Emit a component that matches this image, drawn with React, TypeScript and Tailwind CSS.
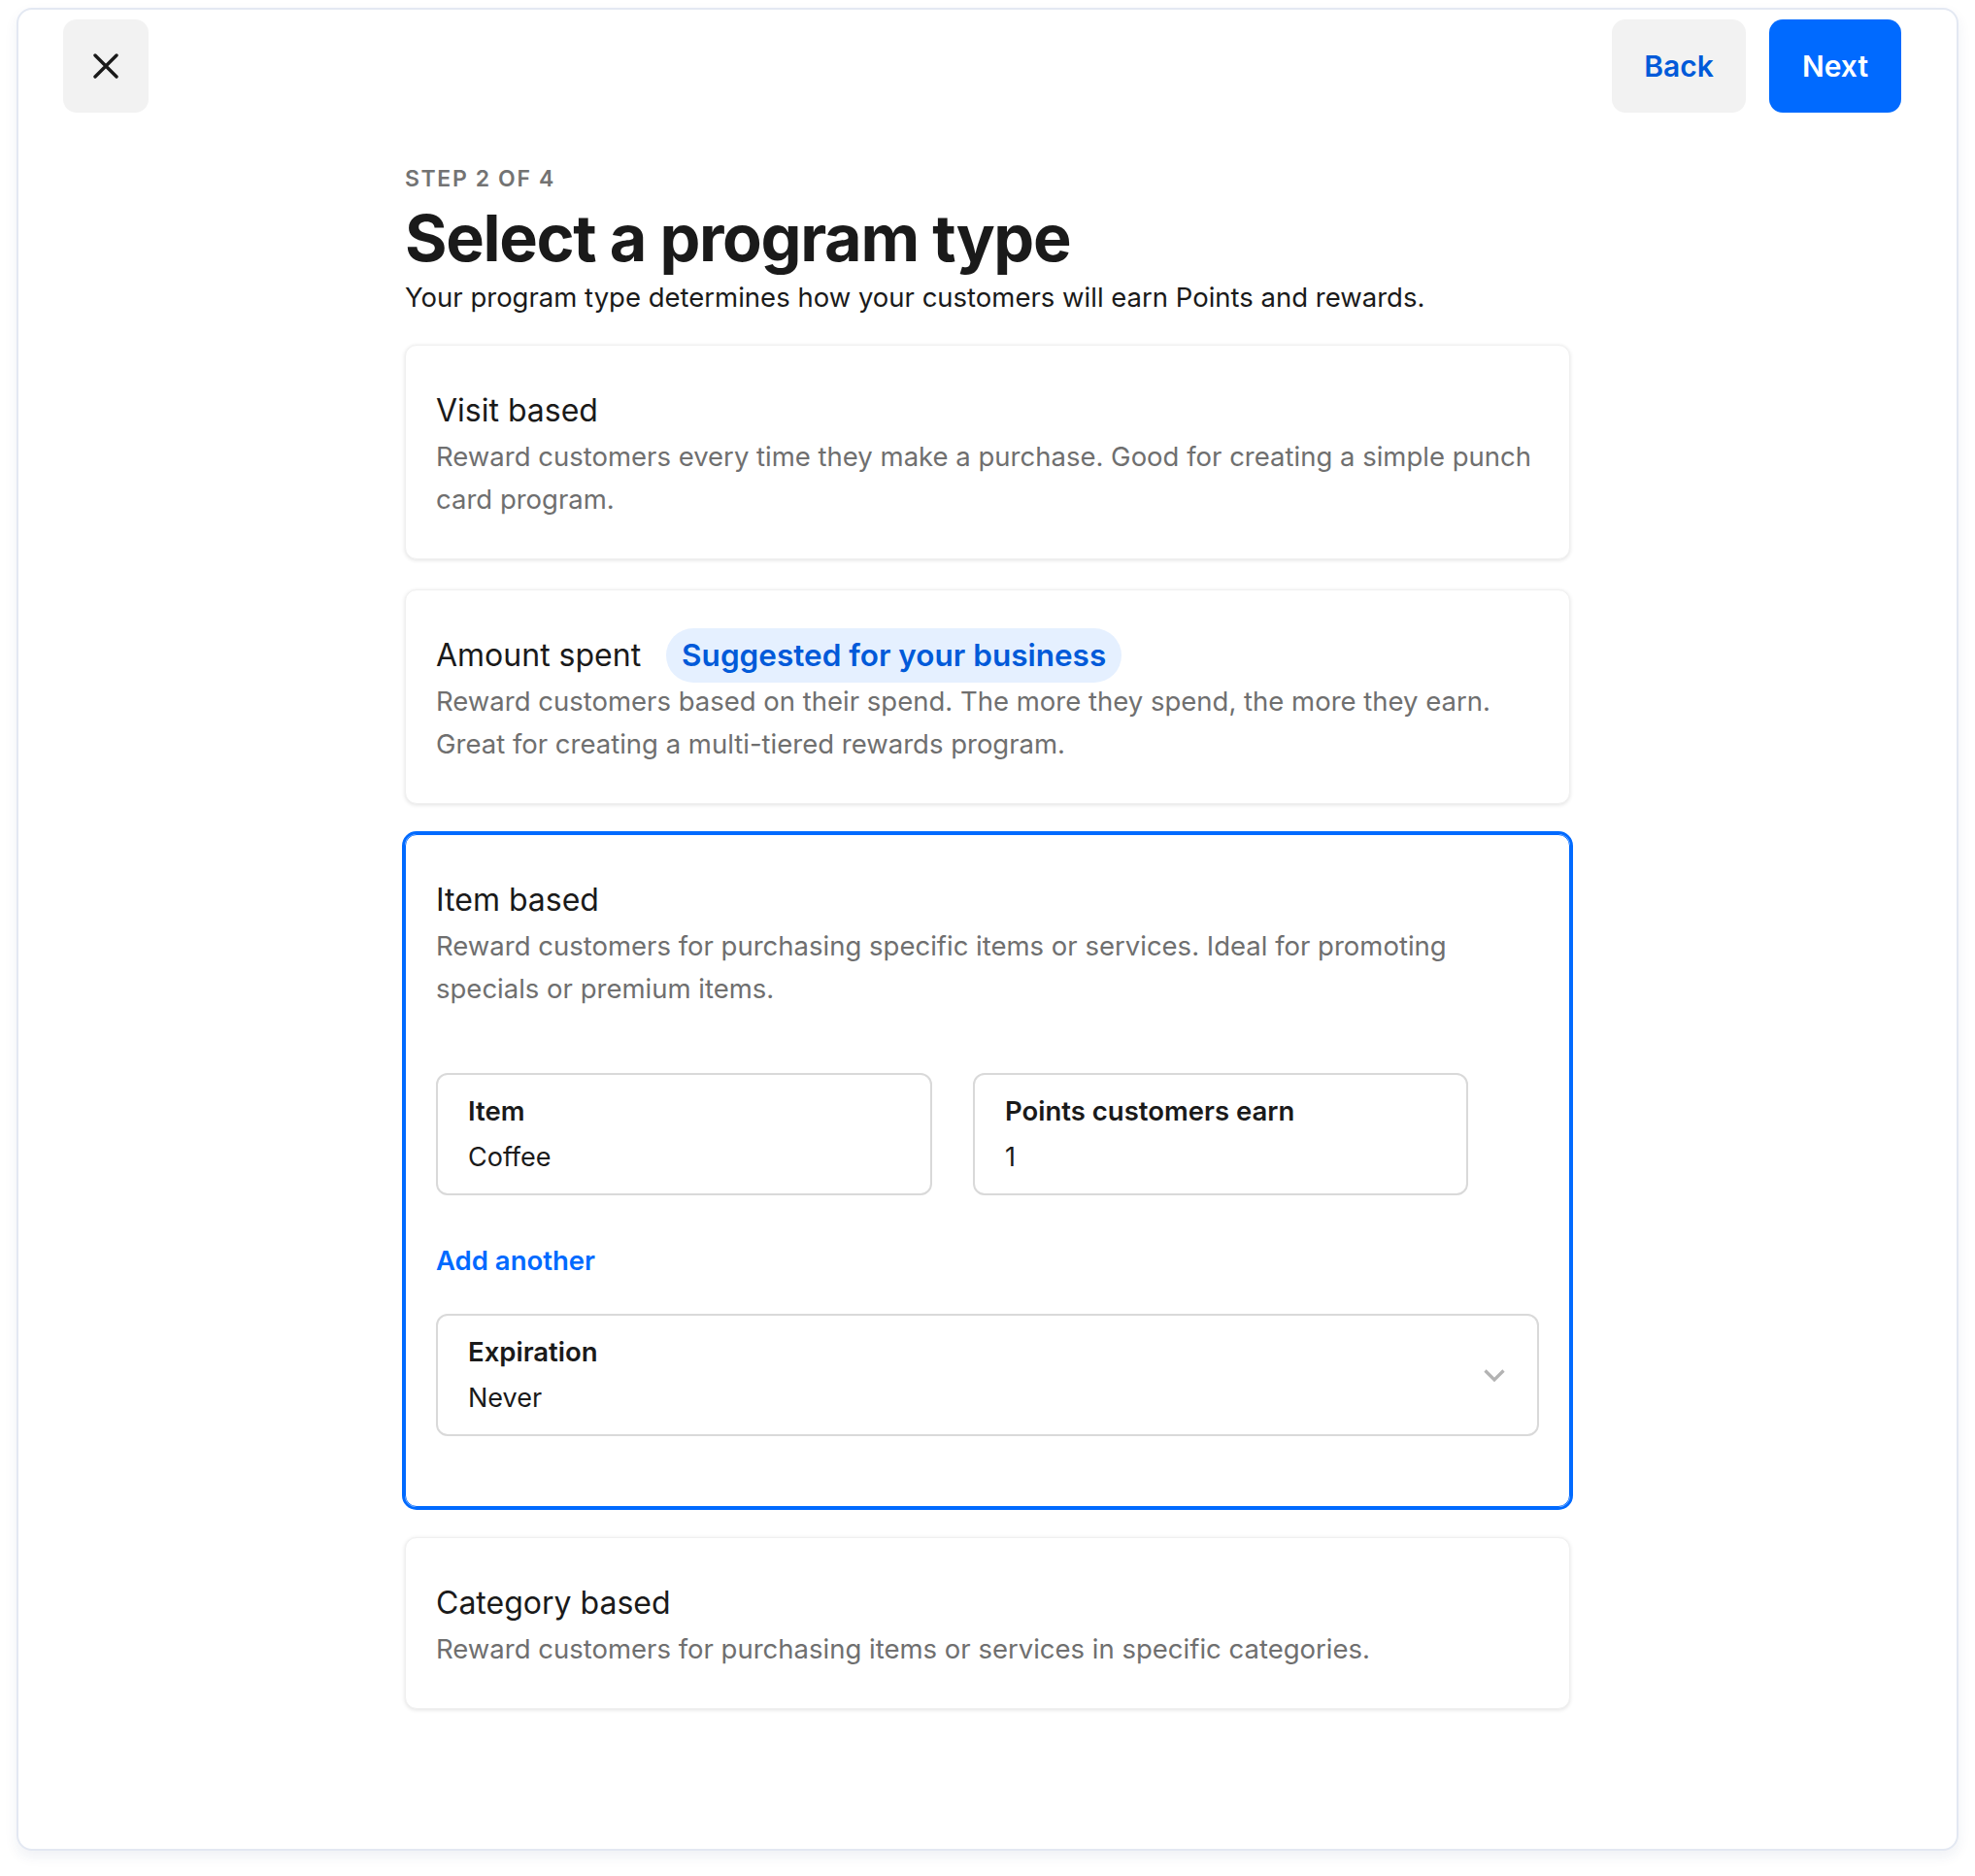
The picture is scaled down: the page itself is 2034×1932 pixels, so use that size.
import React from 'react';

const ProgramCard = ({
  title,
  description,
  badge,
  selected = false,
  children,
}: {
  title: string;
  description: string;
  badge?: string;
  selected?: boolean;
  children?: React.ReactNode;
}) => (
  <div
    className={`rounded-[12px] bg-white px-[31px] pt-[45px] ${
      selected
        ? 'border border-[#006aff] outline-3 outline-solid outline-[#006aff] pb-[72px]'
        : 'border border-[#f0f0f0] shadow-[0_1px_4px_rgba(0,0,0,0.12)] pb-[39px]'
    }`}
  >
    <div className="flex items-center h-[44px]">
      <h3 className="text-[32px] leading-[44px] text-[#1a1a1a]">{title}</h3>
      {badge && (
        <span className="ml-[26px] h-[56px] flex items-center px-[16px] rounded-full bg-[#e5f0ff] text-[#005ad9] text-[31.5px] font-semibold">
          {badge}
        </span>
      )}
    </div>
    <p className="mt-[3px] text-[27.5px] leading-[44px] text-[#6f6f6f]">{description}</p>
    {children}
  </div>
);

const Field = ({ label, value, className = '', chevron = false }: { label: string; value: string; className?: string; chevron?: boolean }) => (
  <div className={`flex items-center justify-between rounded-[12px] border-2 border-[#d9d9d9] pl-[31px] pr-[32px] pt-[19px] pb-[19px] ${className}`}>
    <div>
      <div className="text-[27.5px] leading-[36px] font-semibold text-[#1a1a1a]">{label}</div>
      <div className="mt-[12px] text-[27px] leading-[36px] text-[#1a1a1a]">{value}</div>
    </div>
    {chevron && (
      <svg width="24" height="15" viewBox="0 0 24 15" fill="none">
        <path d="M2.5 2.5 L12 12 L21.5 2.5" stroke="#b3b3b3" strokeWidth="3.2" />
      </svg>
    )}
  </div>
);

export default function App() {
  return (
    <div className="min-h-[1932px] bg-white px-[17px] pt-[8px] pb-[26px] font-[Inter,sans-serif]">
      <div className="h-[1898px] rounded-[16px] border-2 border-[#e3e8f2] shadow-[0_6px_14px_rgba(30,50,110,0.07)] bg-white">
        <div className="flex items-start justify-between pl-[46px] pr-[57px] pt-[10px]">
          <button className="w-[88px] h-[96px] rounded-[14px] bg-[#f2f2f2] flex items-center justify-center">
            <svg width="26" height="26" viewBox="0 0 26 26" fill="none">
              <path d="M2 2 L24 24 M24 2 L2 24" stroke="#1a1a1a" strokeWidth="3.4" strokeLinecap="round" />
            </svg>
          </button>
          <div className="flex gap-[24px]">
            <button className="w-[138px] h-[96px] rounded-[14px] bg-[#f2f2f2] text-[#005ad9] text-[30px] font-semibold">
              Back
            </button>
            <button className="w-[136px] h-[96px] rounded-[14px] bg-[#006aff] text-white text-[30px] font-semibold">
              Next
            </button>
          </div>
        </div>

        <div className="w-[1200px] mx-auto mt-[52px]">
          <div className="text-[23px] leading-[32px] font-semibold tracking-[0.07em] text-[#737373] uppercase">Step 2 of 4</div>
          <h1 className="mt-[4px] text-[66.5px] leading-[82px] font-bold tracking-[-0.02em] text-[#1a1a1a]">Select a program type</h1>
          <p className="mt-[2px] text-[27.5px] leading-[36px] text-[#1a1a1a]">
            Your program type determines how your customers will earn Points and rewards.
          </p>

          <div className="mt-[31px] flex flex-col gap-[31px]">
            <ProgramCard
              title="Visit based"
              description="Reward customers every time they make a purchase. Good for creating a simple punch card program."
            />
            <ProgramCard
              title="Amount spent"
              badge="Suggested for your business"
              description="Reward customers based on their spend. The more they spend, the more they earn. Great for creating a multi-tiered rewards program."
            />
            <ProgramCard
              selected
              title="Item based"
              description="Reward customers for purchasing specific items or services. Ideal for promoting specials or premium items."
            >
              <div className="mt-[65px] flex gap-[42px]">
                <Field label="Item" value="Coffee" className="w-[511px]" />
                <Field label="Points customers earn" value="1" className="w-[510px]" />
              </div>
              <button className="mt-[47px] block text-[27.5px] leading-[40px] font-semibold text-[#006aff]">Add another</button>
              <Field label="Expiration" value="Never" chevron className="mt-[35px]" />
            </ProgramCard>
            <ProgramCard
              title="Category based"
              description="Reward customers for purchasing items or services in specific categories."
            />
          </div>
        </div>
      </div>
    </div>
  );
}
